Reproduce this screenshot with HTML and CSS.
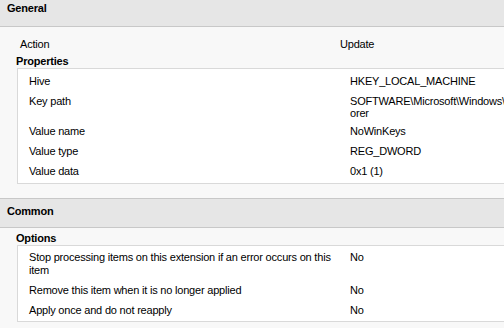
FILE: index.html
```html
<!DOCTYPE html>
<html lang="en">
<head>
  <meta charset="UTF-8">
  <title>Registry Item Settings</title>
  <link rel="stylesheet" href="styles.css">
</head>
<body>
  <div class="section-head first">General</div>
  <div class="section-body general">
    <div class="pair">
      <div>Action</div>
      <div>Update</div>
    </div>
    <div class="group-title">Properties</div>
    <div class="box props">
      <div class="row"><div class="label">Hive</div><div class="value">HKEY_LOCAL_MACHINE</div></div>
      <div class="row tall"><div class="label">Key path</div><div class="value wrap">SOFTWARE\Microsoft\Windows\CurrentVersion\Policies\Expl<br>orer</div></div>
      <div class="row"><div class="label">Value name</div><div class="value">NoWinKeys</div></div>
      <div class="row"><div class="label">Value type</div><div class="value">REG_DWORD</div></div>
      <div class="row"><div class="label">Value data</div><div class="value">0x1 (1)</div></div>
    </div>
  </div>

  <div class="section-head">Common</div>
  <div class="section-body">
    <div class="group-title">Options</div>
    <div class="box opts">
      <div class="row"><div class="label">Stop processing items on this extension if an error occurs on this item</div><div class="value">No</div></div>
      <div class="row"><div class="label">Remove this item when it is no longer applied</div><div class="value">No</div></div>
      <div class="row"><div class="label">Apply once and do not reapply</div><div class="value">No</div></div>
    </div>
  </div>
</body>
</html>
```

FILE: styles.css
```css
html, body {
  overflow: hidden;
}

body {
  margin: 0;
  height: 328px;
  background-color: #f8f8f8;
  color: #000;
  font-family: "Liberation Sans", Arial, sans-serif;
  font-size: 11px;
  line-height: 13px;
  letter-spacing: -0.2px;
}

.section-head {
  background-color: #e6e6e6;
  border-top: 1px solid #c8c8c8;
  border-bottom: 1px solid #c8c8c8;
  padding: 6px 7px 9px;
  font-weight: bold;
}

.section-head.first {
  border-top: none;
  padding: 2px 7px 11px;
}

.section-body {
  padding-top: 4px;
}

.section-body.general {
  padding-top: 11px;
}

.pair {
  display: grid;
  grid-template-columns: 320px 1fr;
  padding-left: 20px;
  margin-bottom: 4px;
}

.group-title {
  font-weight: bold;
  padding-left: 16px;
}

.box {
  margin-left: 17px;
  width: 640px;
  background-color: #fff;
  border: 1px solid #d9d9d9;
}

.box.props {
  padding: 3px 0 1px;
  margin-bottom: 14px;
}

.box.opts {
  padding: 2px 0 0;
}

.row {
  display: grid;
  grid-template-columns: 332px 1fr;
  padding: 3px 0 4px;
}

.row.tall {
  padding-bottom: 3px;
}

.label {
  padding: 0 10px 0 11px;
}

.value {
  white-space: nowrap;
}

.value.wrap {
  line-height: 12px;
}
```
